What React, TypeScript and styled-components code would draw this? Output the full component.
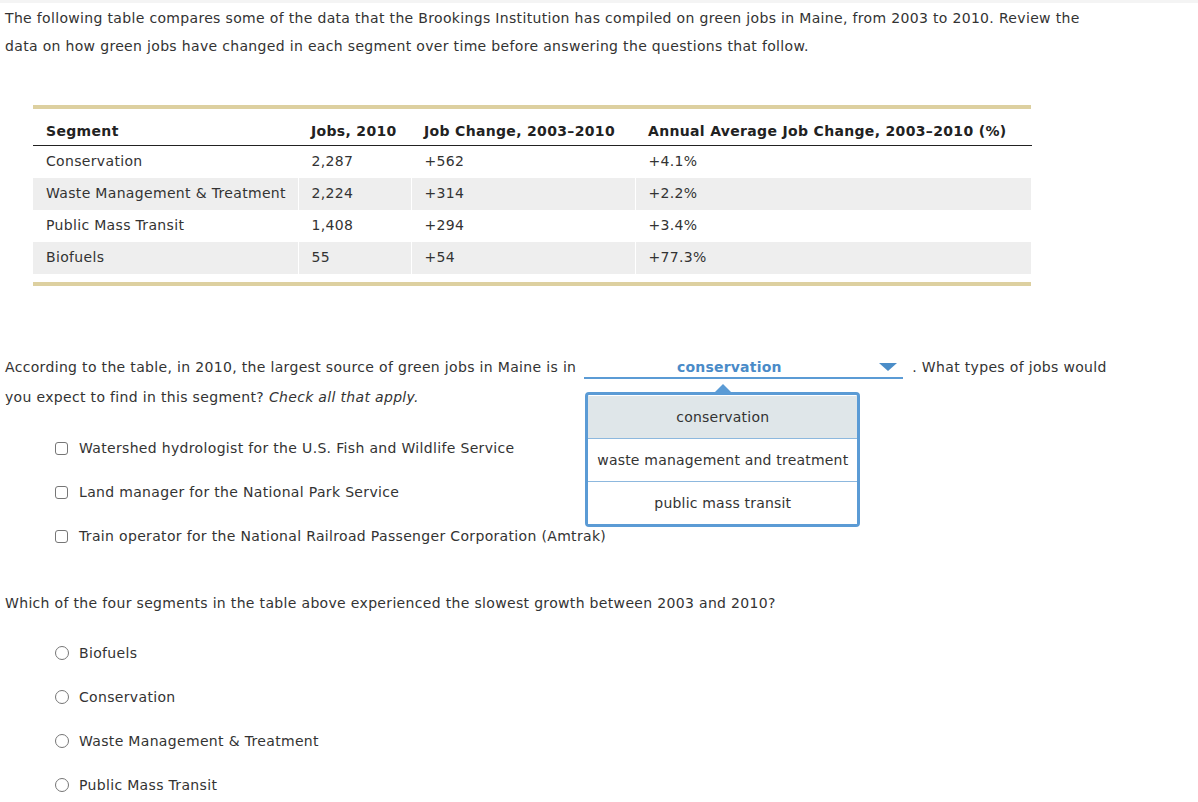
import React from "react";
import styled, { createGlobalStyle } from "styled-components";

const Global = createGlobalStyle`
  html, body { margin: 0; padding: 0; background: #fff; }
  body { font-family: "DejaVu Sans", Verdana, sans-serif; font-size: 14px; letter-spacing: 0.33px; color: #333; }
`;

const TopStrip = styled.div`
  height: 3px;
  background: #f4f4f4;
`;

const Page = styled.div`
  padding: 0 5px;
  max-width: 1112px;
`;

const Para = styled.p`
  margin: 1px 0 0;
  line-height: 28px;
`;

const TableWrap = styled.div`
  margin: 45px 0 0 28px;
  width: 998px;
  border-top: 4px solid #ddd0a0;
  border-bottom: 4px solid #ddd0a0;
  padding-bottom: 8px;
`;

const Table = styled.table`
  width: 100%;
  border-collapse: collapse;
  table-layout: fixed;
`;

const Th = styled.th<{ $w: number }>`
  width: ${(p) => p.$w}px;
  text-align: left;
  font-weight: bold;
  padding: 14px 0 5px 13px;
  border-bottom: 1px solid #222;
  line-height: 17px;
  color: #222;
  white-space: nowrap;
`;

const Tr = styled.tr<{ $shade: boolean }>`
  background: ${(p) => (p.$shade ? "#eeeeee" : "#fff")};
`;

const Td = styled.td`
  padding: 7px 0 8px 13px;
  line-height: 17px;
  border-right: 1px solid #fff;
  white-space: nowrap;
`;

const Sentence = styled.p`
  margin: 66px 0 0;
  line-height: 30px;
`;

const DropWrap = styled.span`
  position: relative;
  display: inline-block;
  width: 319px;
  margin-left: 8px;
  border-bottom: 2px solid #5b9bd5;
  line-height: 20px;
  vertical-align: baseline;
`;

const DropValue = styled.span`
  display: inline-block;
  width: 290px;
  text-align: center;
  font-weight: bold;
  letter-spacing: 0.2px;
  color: #4a8bc8;
`;

const DownArrow = styled.span`
  position: absolute;
  right: 6px;
  top: 6px;
  width: 0;
  height: 0;
  border-left: 9px solid transparent;
  border-right: 9px solid transparent;
  border-top: 8px solid #4b8dc8;
`;

const After = styled.span`
  margin-left: 9px;
`;

const Popup = styled.div`
  position: absolute;
  left: 1px;
  top: 35px;
  width: 269px;
  border: 3px solid #5b9bd5;
  border-radius: 4px;
  background: #fff;
  line-height: 30px;
  z-index: 2;
`;

const Caret = styled.span`
  position: absolute;
  left: 127px;
  top: -11px;
  width: 0;
  height: 0;
  border-left: 8px solid transparent;
  border-right: 8px solid transparent;
  border-bottom: 8px solid #5b9bd5;
`;

const Option = styled.div<{ $active?: boolean; $last?: boolean }>`
  text-align: center;
  padding: 6px 0;
  background: ${(p) => (p.$active ? "#dfe6e9" : "#fff")};
  border-bottom: ${(p) => (p.$last ? "none" : "1px solid #8db8de")};
  color: #333;
  margin: ${(p) => (p.$active ? "1px 0 0" : "0")};
  line-height: 30px;
  white-space: nowrap;
  letter-spacing: 0.2px;
`;

const List = styled.div<{ $top: number; $gap: number }>`
  display: flex;
  flex-direction: column;
  gap: ${(p) => p.$gap}px;
  margin: ${(p) => p.$top}px 0 0 50px;
`;

const Item = styled.label`
  display: flex;
  align-items: center;
  gap: 11px;
  line-height: 20px;
`;

const Box = styled.span`
  width: 11px;
  height: 11px;
  border: 1px solid #767676;
  border-radius: 3px;
  flex: none;
`;

const Circle = styled.span`
  width: 12px;
  height: 12px;
  border: 1px solid #767676;
  border-radius: 50%;
  margin-right: -1px;
  flex: none;
`;

const Question = styled.p`
  margin: 47px 0 0;
  line-height: 20px;
`;

const rows = [
  ["Conservation", "2,287", "+562", "+4.1%"],
  ["Waste Management & Treatment", "2,224", "+314", "+2.2%"],
  ["Public Mass Transit", "1,408", "+294", "+3.4%"],
  ["Biofuels", "55", "+54", "+77.3%"],
];

export default function App() {
  return (
    <>
      <Global />
      <TopStrip />
      <Page>
        <Para>
          The following table compares some of the data that the Brookings Institution has compiled on green jobs in
          Maine, from 2003 to 2010. Review the data on how green jobs have changed in each segment over time before
          answering the questions that follow.
        </Para>
        <TableWrap>
          <Table>
            <thead>
              <tr>
                <Th $w={252}>Segment</Th>
                <Th $w={100}>Jobs, 2010</Th>
                <Th $w={211}>Job Change, 2003–2010</Th>
                <Th $w={383}>Annual Average Job Change, 2003–2010 (%)</Th>
              </tr>
            </thead>
            <tbody>
              {rows.map((r, i) => (
                <Tr key={r[0]} $shade={i % 2 === 1}>
                  {r.map((c) => (
                    <Td key={c}>{c}</Td>
                  ))}
                </Tr>
              ))}
            </tbody>
          </Table>
        </TableWrap>
        <Sentence>
          According to the table, in 2010, the largest source of green jobs in Maine is in
          <DropWrap>
            <DropValue>conservation</DropValue>
            <DownArrow />
            <Popup>
              <Caret />
              <Option $active>conservation</Option>
              <Option>waste management and treatment</Option>
              <Option $last>public mass transit</Option>
            </Popup>
          </DropWrap>
          <After>. What types of jobs would</After> you expect to find in this segment? <i>Check all that apply.</i>
        </Sentence>
        <List $top={26} $gap={24}>
          <Item>
            <Box />
            Watershed hydrologist for the U.S. Fish and Wildlife Service
          </Item>
          <Item>
            <Box />
            Land manager for the National Park Service
          </Item>
          <Item>
            <Box />
            Train operator for the National Railroad Passenger Corporation (Amtrak)
          </Item>
        </List>
        <Question>Which of the four segments in the table above experienced the slowest growth between 2003 and 2010?</Question>
        <List $top={30} $gap={24}>
          <Item>
            <Circle />
            Biofuels
          </Item>
          <Item>
            <Circle />
            Conservation
          </Item>
          <Item>
            <Circle />
            Waste Management &amp; Treatment
          </Item>
          <Item>
            <Circle />
            Public Mass Transit
          </Item>
        </List>
      </Page>
    </>
  );
}
